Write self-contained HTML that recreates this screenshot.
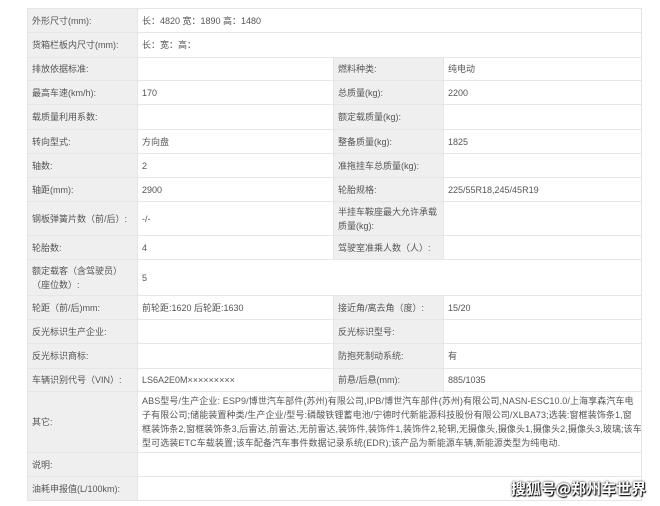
<!DOCTYPE html>
<html><head><meta charset="utf-8"><style>
body{margin:0;background:#fff;width:660px;height:506px;overflow:hidden;position:relative;font-family:"Liberation Sans","Noto Sans CJK SC",sans-serif;}
table{position:absolute;left:27px;top:8px;border-collapse:collapse;width:614px;table-layout:fixed;font-size:9px;color:#555;}
td{border:1px solid #e6e6e6;padding:0 4px;line-height:14px;vertical-align:middle;}
td.l{background:#efefef;}
td.o{letter-spacing:0.1px;white-space:nowrap;overflow:hidden;}
.wm{position:absolute;right:14px;top:478px;font-size:15px;font-weight:bold;color:#fff;text-shadow:0 0 2px #000,1px 1px 1px #000;font-family:"Noto Sans CJK SC",sans-serif;letter-spacing:0px;}
</style></head><body>
<table>
<colgroup><col style="width:110px"><col style="width:196px"><col style="width:110px"><col style="width:198px"></colgroup>
<tr style="height:24px"><td class="l">外形尺寸(mm):</td><td colspan="3">长：4820 宽：1890 高：1480</td></tr>
<tr style="height:25px"><td class="l">货箱栏板内尺寸(mm):</td><td colspan="3">长：宽：高：</td></tr>
<tr style="height:23px"><td class="l">排放依据标准:</td><td></td><td class="l">燃料种类:</td><td>纯电动</td></tr>
<tr style="height:24px"><td class="l">最高车速(km/h):</td><td>170</td><td class="l">总质量(kg):</td><td>2200</td></tr>
<tr style="height:25px"><td class="l">载质量利用系数:</td><td></td><td class="l">额定载质量(kg):</td><td></td></tr>
<tr style="height:24px"><td class="l">转向型式:</td><td>方向盘</td><td class="l">整备质量(kg):</td><td>1825</td></tr>
<tr style="height:24px"><td class="l">轴数:</td><td>2</td><td class="l">准拖挂车总质量(kg):</td><td></td></tr>
<tr style="height:24px"><td class="l">轴距(mm):</td><td>2900</td><td class="l">轮胎规格:</td><td>225/55R18,245/45R19</td></tr>
<tr style="height:34px"><td class="l">钢板弹簧片数（前/后）:</td><td>-/-</td><td class="l">半挂车鞍座最大允许承载质量(kg):</td><td></td></tr>
<tr style="height:24px"><td class="l">轮胎数:</td><td>4</td><td class="l">驾驶室准乘人数（人）:</td><td></td></tr>
<tr style="height:36px"><td class="l">额定载客（含驾驶员）（座位数）:</td><td colspan="3">5</td></tr>
<tr style="height:24px"><td class="l">轮距（前/后)mm:</td><td>前轮距:1620 后轮距:1630</td><td class="l">接近角/离去角（度）:</td><td>15/20</td></tr>
<tr style="height:24px"><td class="l">反光标识生产企业:</td><td></td><td class="l">反光标识型号:</td><td></td></tr>
<tr style="height:25px"><td class="l">反光标识商标:</td><td></td><td class="l">防抱死制动系统:</td><td>有</td></tr>
<tr style="height:23px"><td class="l">车辆识别代号（VIN）:</td><td>LS6A2E0M×××××××××</td><td class="l">前悬/后悬(mm):</td><td>885/1035</td></tr>
<tr style="height:61px"><td class="l">其它:</td><td colspan="3" class="o">ABS型号/生产企业: ESP9/博世汽车部件(苏州)有限公司,IPB/博世汽车部件(苏州)有限公司,NASN-ESC10.0/上海享森汽车电<br>子有限公司;储能装置种类/生产企业/型号:磷酸铁锂蓄电池/宁德时代新能源科技股份有限公司/XLBA73;选装:窗框装饰条1,窗<br>框装饰条2,窗框装饰条3,后雷达,前雷达,无前雷达,装饰件,装饰件1,装饰件2,轮辋,无摄像头,摄像头1,摄像头2,摄像头3,玻璃;该车<br>型可选装ETC车载装置;该车配备汽车事件数据记录系统(EDR);该产品为新能源车辆,新能源类型为纯电动.</td></tr>
<tr style="height:24px"><td class="l">说明:</td><td colspan="3"></td></tr>
<tr style="height:24px"><td class="l">油耗申报值(L/100km):</td><td colspan="3"></td></tr>
</table>
<div class="wm">搜狐号@郑州车世界</div>
</body></html>
